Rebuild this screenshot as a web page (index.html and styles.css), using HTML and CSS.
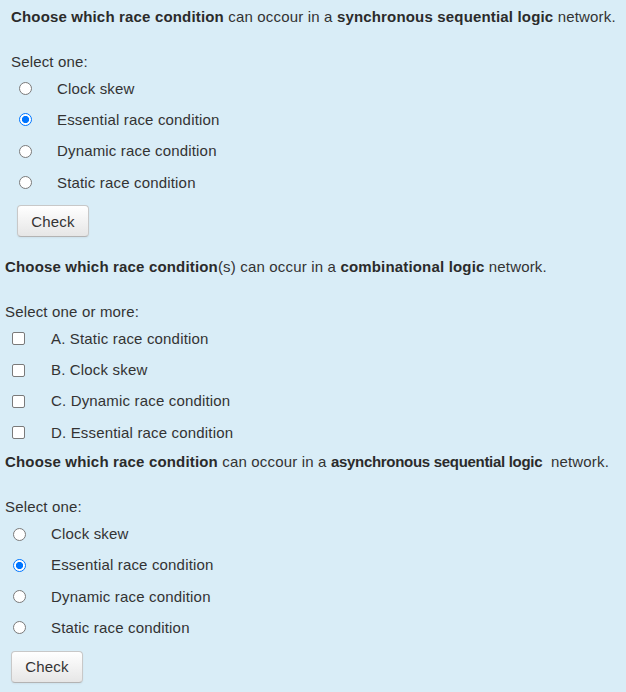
FILE: index.html
```html
<!DOCTYPE html>
<html>
<head>
<meta charset="utf-8">
<link rel="stylesheet" href="styles.css">
</head>
<body>
<div class="que que-first">
  <div class="qtext"><b>Choose which race condition</b> can occour in a <b>synchronous sequential logic</b> network.</div>
  <div class="prompt">Select one:</div>
  <div class="answer">
    <label class="row"><input type="radio" name="q1"><span>Clock skew</span></label>
    <label class="row"><input type="radio" name="q1" checked><span>Essential race condition</span></label>
    <label class="row"><input type="radio" name="q1"><span>Dynamic race condition</span></label>
    <label class="row"><input type="radio" name="q1"><span>Static race condition</span></label>
  </div>
  <button class="btn">Check</button>
</div>
<div class="que que-multi">
  <div class="qtext"><b>Choose which race condition</b>(s) can occur in a <b>combinational logic</b> network.</div>
  <div class="prompt">Select one or more:</div>
  <div class="answer">
    <label class="row"><input type="checkbox"><span>A. Static race condition</span></label>
    <label class="row"><input type="checkbox"><span>B. Clock skew</span></label>
    <label class="row"><input type="checkbox"><span>C. Dynamic race condition</span></label>
    <label class="row"><input type="checkbox"><span>D. Essential race condition</span></label>
  </div>
</div>
<div class="que">
  <div class="qtext"><b>Choose which race condition</b> can occour in a <b class="tight">asynchronous sequential logic</b>&nbsp; network.</div>
  <div class="prompt">Select one:</div>
  <div class="answer">
    <label class="row"><input type="radio" name="q3"><span>Clock skew</span></label>
    <label class="row"><input type="radio" name="q3" checked><span>Essential race condition</span></label>
    <label class="row"><input type="radio" name="q3"><span>Dynamic race condition</span></label>
    <label class="row"><input type="radio" name="q3"><span>Static race condition</span></label>
  </div>
  <button class="btn">Check</button>
</div>
</body>
</html>
```
FILE: styles.css
```css
html, body {
  margin: 0;
  padding: 0;
  background: #d9edf7;
}
body {
  font-family: "Liberation Sans", Arial, sans-serif;
  font-size: 15px;
  line-height: 20px;
  letter-spacing: 0.17px;
  color: #333;
  width: 626px;
  height: 692px;
  overflow: hidden;
}
.que {
  padding-left: 5px;
  display: flex;
  flex-direction: column;
  align-items: flex-start;
}
.que-first {
  padding-left: 11px;
  padding-top: 7px;
  margin-bottom: 20px;
}
.que-multi {
  margin-bottom: 4px;
}
.qtext {
  white-space: nowrap;
}
.qtext b {
  color: #2b2b2b;
}
.qtext .tight {
  letter-spacing: -0.3px;
}
.prompt {
  margin-top: 25px;
}
.answer {
  display: flex;
  flex-direction: column;
  padding-top: 1px;
}
.row {
  display: flex;
  align-items: center;
  height: 31.3px;
}
.row input {
  -webkit-appearance: none;
  appearance: none;
  box-sizing: border-box;
  margin: 0 26px 0 7px;
  width: 13px;
  height: 13px;
  flex: none;
  background: #fff;
  border: 1.5px solid #7a7a7a;
}
.row input[type="radio"] {
  margin-left: 8px;
  margin-right: 25px;
  border-radius: 50%;
}
.row input[type="radio"]:checked {
  border-color: #0075ff;
  background: radial-gradient(circle, #0075ff 0 3.3px, #fff 3.9px);
}
.row input[type="checkbox"] {
  border-radius: 2px;
}
.btn {
  margin-top: 7px;
  margin-left: 6px;
  width: 72px;
  height: 32px;
  padding: 0;
  font-family: "Liberation Sans", Arial, sans-serif;
  font-size: 15px;
  letter-spacing: 0.17px;
  color: #333;
  background: linear-gradient(#ffffff, #e6e6e6);
  border: 1px solid #c8c8c8;
  border-bottom-color: #b3b3b3;
  border-radius: 4px;
  box-shadow: inset 0 1px 0 rgba(255,255,255,.2), 0 1px 2px rgba(0,0,0,.05);
}
```
